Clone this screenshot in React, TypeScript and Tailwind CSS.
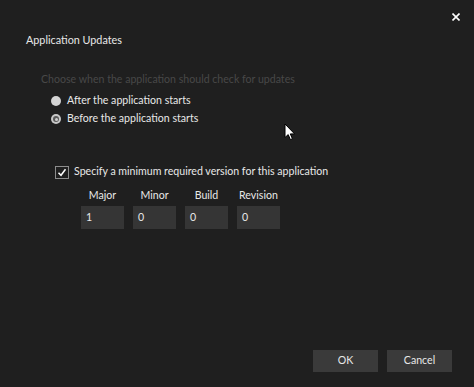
export default function App() {
  const fields = [
    { label: "Major", value: "1" },
    { label: "Minor", value: "0" },
    { label: "Build", value: "0" },
    { label: "Revision", value: "0" },
  ];

  return (
    <div className="relative w-[474px] h-[387px] bg-[#1f1f1f] flex flex-col text-[#e8e8e8] text-[10.6px] font-['Lato',sans-serif] overflow-hidden">
      {/* close */}
      <div className="h-[30px] flex justify-end items-start pt-[13px] pr-[14px]">
        <svg width="8" height="8" viewBox="0 0 8 8">
          <path d="M0.5 0.5 L7.5 7.5 M7.5 0.5 L0.5 7.5" stroke="#ffffff" strokeWidth="1.6" />
        </svg>
      </div>

      <div className="h-[20px] leading-[20px] pl-[26px] text-[10.8px]">Application Updates</div>

      <div className="mt-[19px] h-[20px] leading-[20px] pl-[41px] text-[#484848]">
        Choose when the application should check for updates
      </div>

      <div className="mt-[3px] pl-[51px] flex flex-col">
        <label className="h-[18px] flex items-center gap-[6px]">
          <span className="w-[10px] h-[10px] rounded-full bg-[#d4d4d4]" />
          <span>After the application starts</span>
        </label>
        <label className="h-[18px] flex items-center gap-[6px]">
          <span className="w-[10px] h-[10px] rounded-full bg-[#c8c8c8] flex items-center justify-center">
            <span className="w-[6px] h-[6px] rounded-full bg-[#5a5a5a] flex items-center justify-center">
              <span className="w-[3px] h-[3px] rounded-full bg-[#cfcfcf]" />
            </span>
          </span>
          <span>Before the application starts</span>
        </label>
      </div>

      <label className="mt-[34px] h-[20px] pl-[55px] flex items-center gap-[5px]">
        <span className="w-[14px] h-[13px] border border-[#8c8c8c] flex items-center justify-center">
          <svg width="10" height="9" viewBox="0 0 10 9">
            <path d="M1.5 4.8 L4 7.3 L8.5 1.2" fill="none" stroke="#ffffff" strokeWidth="1.5" />
          </svg>
        </span>
        <span>Specify a minimum required version for this application</span>
      </label>

      <div className="mt-[4px] pl-[81px] flex gap-[9px]">
        {fields.map((f) => (
          <div key={f.label} className="w-[43px] flex flex-col">
            <div className="h-[18px] leading-[18px] text-center">{f.label}</div>
            <div className="mt-[2px] h-[23px] bg-[#353535] leading-[23px] pl-[5px]">{f.value}</div>
          </div>
        ))}
      </div>

      <div className="flex-1" />

      <div className="flex justify-end gap-[9px] pr-[22px] pb-[15px]">
        <button className="w-[65px] h-[22px] bg-[#3a3a3a] text-[#e8e8e8] text-[10.6px]">OK</button>
        <button className="w-[65px] h-[22px] bg-[#3a3a3a] text-[#e8e8e8] text-[10.6px]">Cancel</button>
      </div>

      {/* mouse pointer */}
      <svg className="absolute left-[284px] top-[123px]" width="12" height="18" viewBox="0 0 12 18">
        <path d="M1 1 L1 14.5 L4.2 11.6 L6.4 16.6 L8.4 15.7 L6.3 10.9 L10.6 10.9 Z" fill="#ffffff" stroke="#000000" strokeWidth="1" strokeLinejoin="round" />
      </svg>
    </div>
  );
}
